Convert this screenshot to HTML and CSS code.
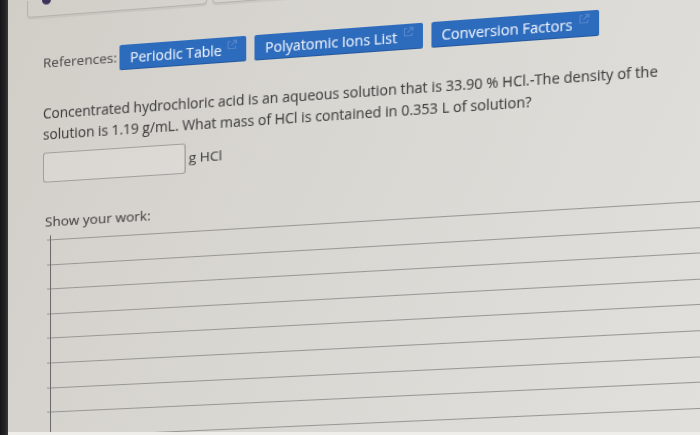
FILE: index.html
```html
<!DOCTYPE html>
<html lang="en">
<head>
<meta charset="utf-8">
<title>Concentrated hydrochloric acid</title>
<link rel="stylesheet" href="styles.css">
</head>
<body>
<div class="frame">
  <div class="bezel"></div>
  <div class="screen">
    <div class="page">
      <div class="topbar">
        <div class="tab tab-q"><span class="radio"></span></div>
        <div class="tab tab-next"></div>
      </div>
      <div class="refs">
        <span class="refs-label">References:</span>
        <a class="ref-btn">Periodic Table<svg class="ext" viewBox="0 0 12 12"><path d="M5 2.5H2.5v7h7V7M7 1.5h3.5V5M10.5 1.5 5.5 6.5"/></svg></a>
        <a class="ref-btn">Polyatomic Ions List<svg class="ext" viewBox="0 0 12 12"><path d="M5 2.5H2.5v7h7V7M7 1.5h3.5V5M10.5 1.5 5.5 6.5"/></svg></a>
        <a class="ref-btn">Conversion Factors<svg class="ext" viewBox="0 0 12 12"><path d="M5 2.5H2.5v7h7V7M7 1.5h3.5V5M10.5 1.5 5.5 6.5"/></svg></a>
      </div>
      <p class="question">Concentrated hydrochloric acid is an aqueous solution that is 33.90 % HCl.-The density of the<br>solution is 1.19 g/mL. What mass of HCl is contained in 0.353 L of solution?</p>
      <div class="answer">
        <span class="answer-box"></span>
        <span class="unit">g HCl</span>
      </div>
      <div class="work-label">Show your work:</div>
      <div class="work"></div>
    </div>
  </div>
</div>
</body>
</html>
```
FILE: styles.css
```css
html, body {
  margin: 0;
  padding: 0;
  width: 700px;
  height: 435px;
  overflow: hidden;
  background: #ecebe8;
}

.frame {
  display: flex;
  width: 700px;
  height: 435px;
}

.bezel {
  width: 8px;
  flex: none;
  background: linear-gradient(90deg, #161618 0, #222225 5px, #3a3a3c 8px);
}

.screen {
  flex: 1;
  height: 432px;
  overflow: hidden;
  border-bottom: 3px solid #efeeeb;
  background: linear-gradient(115deg, #d1cec8 0%, #d8d6d1 40%, #e1e0dc 100%);
}

.page {
  width: 740px;
  box-sizing: border-box;
  padding-left: 35px;
  font-family: "Open Sans", "DejaVu Sans", sans-serif;
  color: #444;
  -webkit-text-stroke: 0.08px currentColor;
  transform-origin: 32px 412px;
  transform: matrix3d(1, -0.046, 0, -0.000077, 0, 1, 0, 0, 0, 0, 1, 0, 0, 0, 0, 1);
}

.topbar {
  display: flex;
  gap: 5px;
  height: 17px;
  margin-left: -16px;
}

.tab {
  height: 17px;
  box-sizing: border-box;
  border: 1px solid #b3b1ac;
  border-top: none;
  border-radius: 0 0 4px 4px;
  box-shadow: 0 2px 0 rgba(0, 0, 0, 0.05);
}

.tab-q {
  width: 178px;
  display: flex;
  align-items: flex-start;
  padding-left: 14px;
}

.radio {
  width: 9px;
  height: 9px;
  border-radius: 50%;
  background: #3d3459;
  margin-top: -4px;
}

.tab-next {
  width: 270px;
}

.refs {
  display: flex;
  align-items: center;
  height: 24px;
  margin-top: 34px;
}

.refs-label {
  font-size: 13.5px;
  color: #505050;
  margin-right: 3px;
}

.ref-btn {
  display: inline-flex;
  align-items: center;
  gap: 4px;
  height: 24px;
  padding: 0 8px 0 10px;
  box-sizing: border-box;
  font-size: 13.7px;
  color: #eef3fa;
  background: #2d6bbd;
  border-radius: 2px;
  box-shadow: 0 1px 0 #24589c;
}

.ref-btn + .ref-btn {
  margin-left: 8px;
}

.ext {
  width: 12px;
  height: 12px;
  align-self: flex-start;
  margin-top: 2px;
  fill: none;
  stroke: rgba(255, 255, 255, 0.18);
  stroke-width: 1.2;
}

.question {
  margin: 28.3px 0 0;
  font-size: 13.6px;
  line-height: 21px;
  color: #3f3f3f;
}

.answer {
  display: flex;
  align-items: center;
  margin-top: 7.7px;
}

.answer-box {
  width: 141px;
  height: 30px;
  box-sizing: border-box;
  border: 1px solid #a19f9b;
  border-right-color: #8f8d89;
  border-radius: 3px;
  background: rgba(255, 255, 255, 0.14);
}

.unit {
  margin-left: 3px;
  font-size: 13.5px;
  line-height: 21px;
  color: #424242;
}

.work-label {
  margin-top: 29.3px;
  margin-left: 2px;
  font-size: 13.5px;
  line-height: 21px;
  color: #444;
}

.work {
  margin-top: 2.7px;
  margin-left: 4px;
  height: 240px;
  background:
    linear-gradient(90deg, transparent 3px, #6a6a6a 3px, #6a6a6a 4px, transparent 4px),
    repeating-linear-gradient(180deg, transparent 0, transparent 4px, #989794 4px, #989794 5px, transparent 5px, transparent 24.6px);
}
```
